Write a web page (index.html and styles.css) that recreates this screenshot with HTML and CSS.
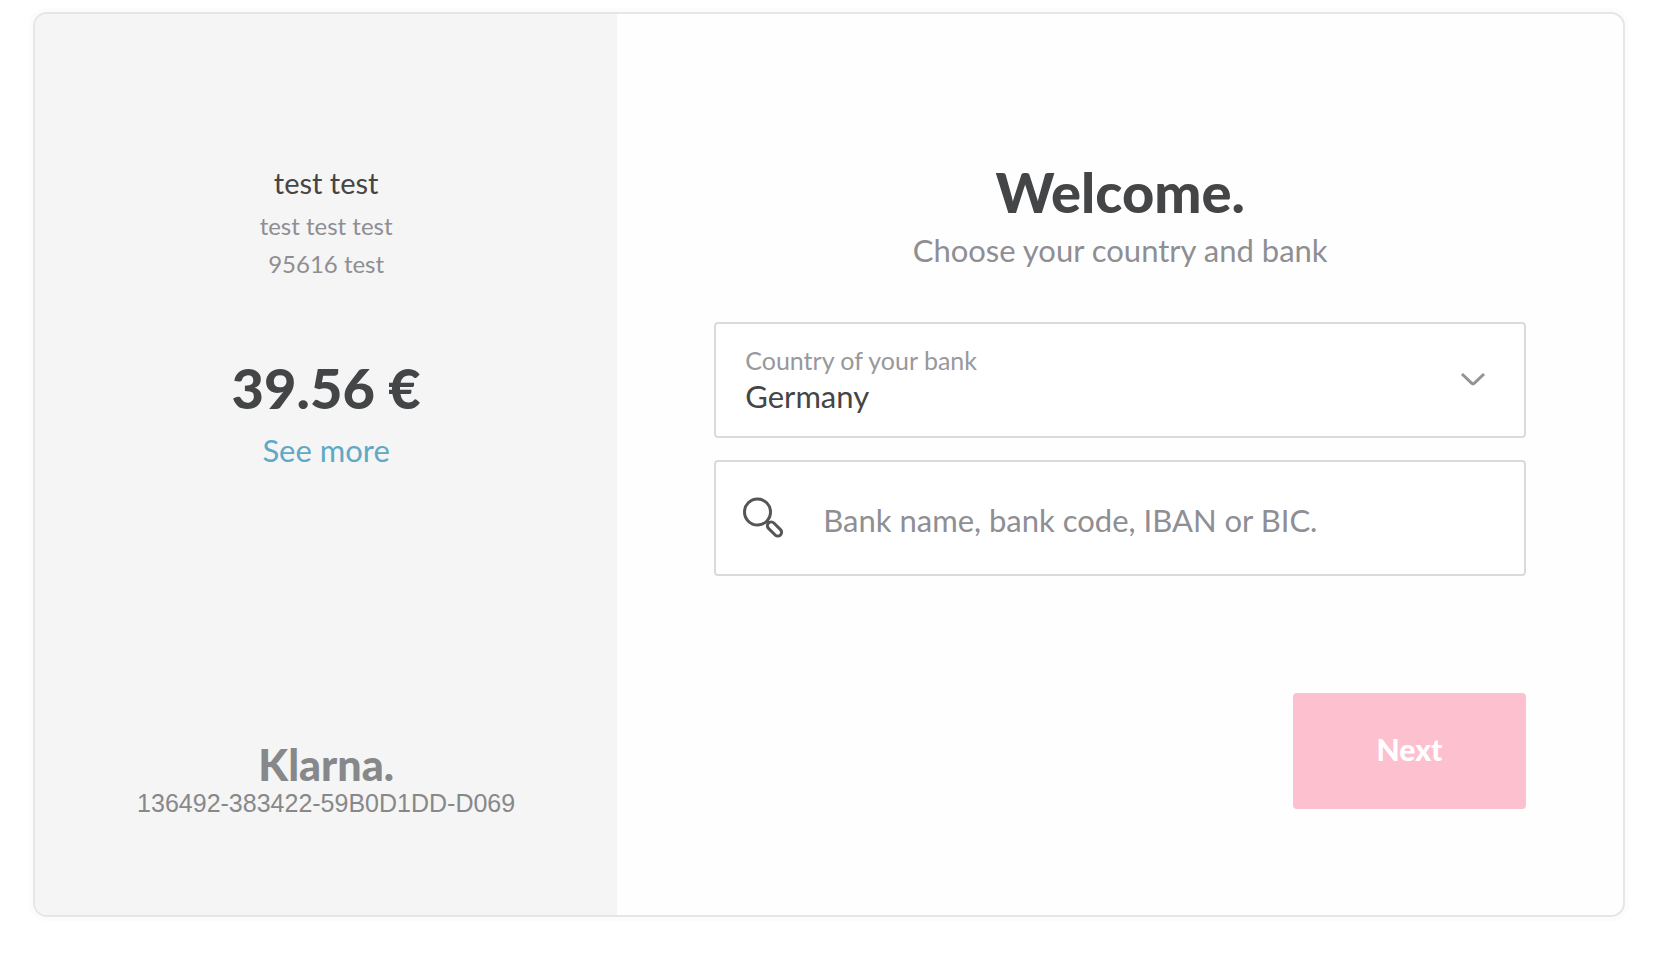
FILE: index.html
```
<!DOCTYPE html>
<html lang="en">
<head>
  <meta charset="UTF-8">
  <meta name="viewport" content="width=device-width, initial-scale=1">
  <title>Klarna - Choose your bank</title>
  <link rel="stylesheet" href="styles.css">
</head>
<body>
  <div class="card">
    <aside class="summary">
      <div class="name">test test</div>
      <div class="address">
        test test test<br>
        95616 test
      </div>
      <div class="amount">39.56 €</div>
      <a class="more" href="#">See more</a>
      <footer class="reference">
        <div class="logo">Klarna.</div>
        <div class="transaction">136492-383422-59B0D1DD-D069</div>
      </footer>
    </aside>

    <main class="content">
      <h1>Welcome.</h1>
      <p class="subtitle">Choose your country and bank</p>
      <form>
        <div class="field">
          <div class="field_text">
            <label for="country">Country of your bank</label>
            <select id="country">
              <option>Germany</option>
            </select>
          </div>
          <svg class="chevron" viewBox="0 0 26 16" aria-hidden="true">
            <path d="M2 2 L11.6 11.2 Q13 12.5 14.4 11.2 L24 2"/>
          </svg>
        </div>
        <div class="field search">
          <svg class="glass" viewBox="0 0 42 42" aria-hidden="true">
            <circle cx="15.5" cy="15" r="13"/>
            <path d="M24.4 24 L26.6 26.2"/>
            <rect x="24" y="28.2" width="17" height="7.6" rx="3.8" transform="rotate(45 32.5 32)"/>
          </svg>
          <input type="text" id="bank" aria-label="Bank" placeholder="Bank name, bank code, IBAN or BIC.">
        </div>
        <button type="button" class="next">Next</button>
      </form>
    </main>
  </div>
</body>
</html>
```

FILE: styles.css
```
* {
  box-sizing: border-box;
}

body {
  margin: 0;
  padding: 12px 33px 38px;
  background: #fff;
  color: #444546;
  font-family: Lato, "Liberation Sans", sans-serif;
  font-size: 31px;
  line-height: 40px;
}

.card {
  display: grid;
  grid-template-columns: minmax(0, 11fr) minmax(0, 19fr);
  min-height: calc(100vh - 51px);
  border: 2px solid #e6e6e6;
  border-radius: 14px;
  box-shadow: 0 0 0 4px #fcfcfc;
  overflow: hidden;
  background: #fefefe;
}

/* left side */
.summary {
  display: flex;
  flex-direction: column;
  align-items: center;
  padding: 149px 24px 94px;
  background: #f5f5f5;
  text-align: center;
}

.name {
  font-size: 29px;
}

.address {
  margin-top: 4px;
  font-size: 24px;
  line-height: 38px;
  color: #8e8e93;
}

.amount {
  margin-top: 73px;
  font-size: 56px;
  font-weight: 900;
  line-height: 64px;
}

.more {
  margin-top: 10px;
  color: #5fa9c6;
  text-decoration: none;
}

.reference {
  margin-top: auto;
  color: #87888a;
}

.logo {
  font-size: 43px;
  font-weight: 900;
}

.transaction {
  font-family: "Liberation Sans", Arial, sans-serif;
  font-size: 25px;
  line-height: 36px;
}

/* right side */
.content {
  padding: 146px 97px 106px;
}

h1 {
  margin: 0;
  font-size: 56px;
  font-weight: 900;
  line-height: 64px;
  text-align: center;
}

.subtitle {
  margin: 6px 0 52px;
  color: #8e8e93;
  text-align: center;
}

form {
  display: flex;
  flex-direction: column;
  gap: 22px;
}

.field {
  display: flex;
  align-items: center;
  height: 116px;
  padding: 0 38px 0 29px;
  border: 2px solid #d8dbdc;
  border-radius: 4px;
  background: #fff;
}

.field_text {
  flex: 1;
}

.field label {
  display: block;
  font-size: 25px;
  line-height: 32px;
  color: #98989c;
}

select,
input {
  display: block;
  width: 100%;
  height: 40px;
  margin: 0;
  padding: 0;
  border: 0;
  outline: 0;
  background: transparent;
  color: inherit;
  font: inherit;
  appearance: none;
}

input {
  height: 100%;
  padding-top: 4px;
}

input::placeholder {
  color: #8e8e93;
  opacity: 1;
}

svg {
  flex: none;
  fill: none;
}

.chevron {
  width: 26px;
  height: 16px;
  stroke: #929496;
  stroke-width: 3;
}

.search {
  gap: 39px;
  padding-left: 26px;
}

.glass {
  width: 42px;
  height: 42px;
  stroke: #555;
  stroke-width: 3;
}

.next {
  align-self: flex-end;
  width: 233px;
  height: 116px;
  margin-top: 95px;
  padding: 0 0 4px;
  border: 0;
  border-radius: 4px;
  background: #fdc0cf;
  color: #fff;
  font: inherit;
  font-size: 30px;
  font-weight: 900;
}
```
